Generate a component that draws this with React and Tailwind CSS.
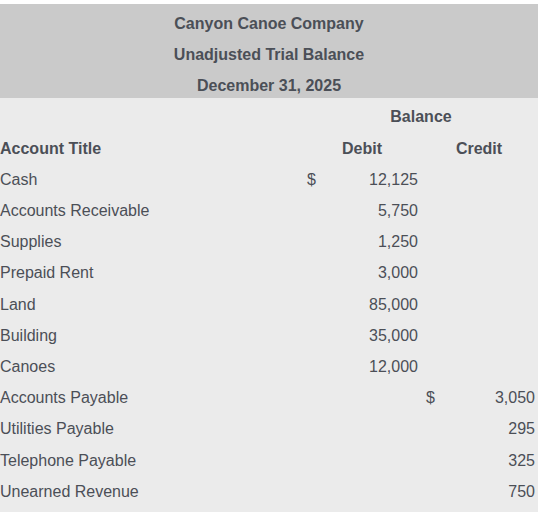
const rows = [
  { title: 'Cash', debit: '12,125', debitSign: true },
  { title: 'Accounts Receivable', debit: '5,750' },
  { title: 'Supplies', debit: '1,250' },
  { title: 'Prepaid Rent', debit: '3,000' },
  { title: 'Land', debit: '85,000' },
  { title: 'Building', debit: '35,000' },
  { title: 'Canoes', debit: '12,000' },
  { title: 'Accounts Payable', credit: '3,050', creditSign: true },
  { title: 'Utilities Payable', credit: '295' },
  { title: 'Telephone Payable', credit: '325' },
  { title: 'Unearned Revenue', credit: '750' },
]

const headings = ['Canyon Canoe Company', 'Unadjusted Trial Balance', 'December 31, 2025']

export default function App() {
  return (
    <div className="min-h-[512px] bg-white pt-[4px] text-[16px] text-[#4b4f57] font-['Liberation_Sans',Arial,sans-serif]">
      <div className="w-[538px] bg-[#cacaca]">
        {headings.map((h) => (
          <div key={h} className="h-[31.33px] pt-[9.5px] text-center font-bold leading-5">
            {h}
          </div>
        ))}
      </div>
      <div className="min-h-[414px] w-[538px] bg-[#ebebeb]">
        <div className="grid h-[31.2px] grid-cols-[304px_234px]">
          <div />
          <div className="pt-[9.5px] text-center font-bold leading-5">Balance</div>
        </div>
        <div className="grid h-[31.2px] grid-cols-[304px_116px_118px] font-bold leading-5">
          <div className="pt-[9.5px]">Account Title</div>
          <div className="pt-[9.5px] text-center">Debit</div>
          <div className="pt-[9.5px] text-center">Credit</div>
        </div>
        {rows.map((r) => (
          <div key={r.title} className="grid h-[31.2px] grid-cols-[304px_116px_118px] leading-5">
            <div className="pt-[9.5px]">{r.title}</div>
            <div className="flex justify-between pt-[9.5px] pl-[3px] pr-[2px]">
              <span>{r.debitSign ? '$' : ''}</span>
              <span>{r.debit}</span>
            </div>
            <div className="flex justify-between pt-[9.5px] pl-[6px] pr-[3px]">
              <span>{r.creditSign ? '$' : ''}</span>
              <span>{r.credit}</span>
            </div>
          </div>
        ))}
      </div>
    </div>
  )
}
